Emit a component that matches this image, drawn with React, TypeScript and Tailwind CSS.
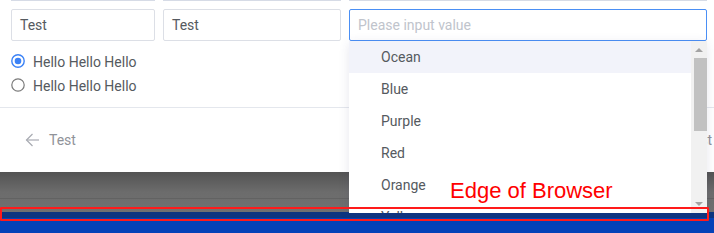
import React from 'react'

const colors = ['Ocean', 'Blue', 'Purple', 'Red', 'Orange', 'Yellow']

function Radio({ checked, label }: { checked?: boolean; label: string }) {
  return (
    <label className="flex h-[23px] items-center">
      <svg width="14" height="14" viewBox="0 0 14 14" className="ml-[11px] mt-[-3px]">
        {checked ? (
          <>
            <circle cx="7" cy="7" r="6.2" fill="white" stroke="#3b82f6" strokeWidth="1.4" />
            <circle cx="7" cy="7" r="3.3" fill="#3b82f6" />
          </>
        ) : (
          <circle cx="7" cy="7" r="6.2" fill="white" stroke="#7a7a7a" strokeWidth="1.2" />
        )}
      </svg>
      <span className="ml-[8px] text-[14px] text-[#555a60]">{label}</span>
    </label>
  )
}

function ArrowLeft() {
  return (
    <svg width="15" height="14" viewBox="0 0 15 14" fill="none" stroke="#a8abb2" strokeWidth="1.2">
      <path d="M14 7H1.5" />
      <path d="M7.5 1L1.5 7l6 6" />
    </svg>
  )
}

function ArrowRight() {
  return (
    <svg width="15" height="14" viewBox="0 0 15 14" fill="none" stroke="#a8abb2" strokeWidth="1.2">
      <path d="M1 7h12.5" />
      <path d="M7.5 1l6 6-6 6" />
    </svg>
  )
}

export default function App() {
  return (
    <div
      className="relative h-[233px] w-[714px] overflow-hidden bg-white"
      style={{ fontFamily: 'Roboto, "Liberation Sans", sans-serif' }}
    >
      {/* page */}
      <div className="flex h-[172px] flex-col bg-white">
        {/* bottom edges of the row above */}
        <div className="flex gap-[8px] pl-[11px]">
          <div className="h-[1px] w-[144px] bg-[#d6dbe6]" />
          <div className="h-[1px] w-[178px] bg-[#d6dbe6]" />
          <div className="h-[1px] w-[358px] bg-[#d6dbe6]" />
        </div>

        <div className="mt-[8px] flex gap-[8px] pl-[11px]">
          <div className="flex h-[32px] w-[144px] items-center rounded-[2px] border border-[#dcdfe6] px-[8px] text-[14px] text-[#555a60]">
            Test
          </div>
          <div className="flex h-[32px] w-[178px] items-center rounded-[2px] border border-[#dcdfe6] px-[8px] text-[14px] text-[#555a60]">
            Test
          </div>
          <div className="flex h-[32px] w-[358px] items-center rounded-[2px] border border-[#4a8ff5] px-[8px] text-[14px] text-[#c0c4cc]">
            Please input value
          </div>
        </div>

        <div className="mt-[10px] flex flex-col">
          <Radio checked label="Hello Hello Hello" />
          <div className="mt-[1px]">
            <Radio label="Hello Hello Hello" />
          </div>
        </div>

        <div className="mt-[9px] h-[1px] w-full bg-[#e4e7ed]" />

        <div className="flex flex-1 items-center pl-[25px] text-[14px] text-[#909399]">
          <div className="flex items-center gap-[9px]">
            <ArrowLeft />
            <span>Test</span>
          </div>
          <div className="ml-auto mr-[-22px] flex items-center gap-[9px]">
            <span>Test</span>
            <ArrowRight />
          </div>
        </div>
      </div>

      {/* area below the page */}
      <div className="h-[40px] bg-gradient-to-b from-[#535353] via-[#6c6c6c] to-[#707070]">
        <div className="h-[26px]" />
        <div className="h-[1px] bg-[#626262]" />
      </div>
      <div className="h-[6px] bg-[#0d3580]" />
      <div className="h-[15px] bg-[#0442b8]" />

      {/* dropdown */}
      <div className="absolute left-[349px] top-[41px] flex h-[172px] w-[358px] overflow-hidden bg-white shadow-[0_2px_10px_0_rgba(60,60,120,0.12)]">
        <ul className="flex-1 text-[14px] text-[#555a60]">
          {colors.map((c, i) => (
            <li
              key={c}
              className={`flex h-[32px] items-center pl-[32px] ${i === 0 ? 'bg-[#f2f3fa]' : ''}`}
            >
              {c}
            </li>
          ))}
        </ul>
        <div className="flex w-[16px] flex-col items-center bg-[#f1f1f1] pt-[7px]">
          <svg width="8" height="4" viewBox="0 0 8 4">
            <path d="M0 4L4 0l4 4z" fill="#a3a3a3" />
          </svg>
          <div className="ml-[3px] mt-[6px] h-[73px] w-[13px] bg-[#c1c1c1]" />
          <div className="flex-1" />
          <svg width="8" height="4" viewBox="0 0 8 4" className="mb-[7px]">
            <path d="M0 0h8L4 4z" fill="#a3a3a3" />
          </svg>
        </div>
      </div>

      {/* annotation */}
      <div className="absolute left-[0px] top-[207px] h-[14px] w-[709px] rounded-[1px] border-2 border-[#ff1a1a]" />
      <div
        className="absolute left-[450px] top-[180px] text-[22px] leading-[22px] text-[#ff0000]"
        style={{ fontFamily: '"Liberation Sans", Arial, sans-serif' }}
      >
        Edge of Browser
      </div>
    </div>
  )
}
